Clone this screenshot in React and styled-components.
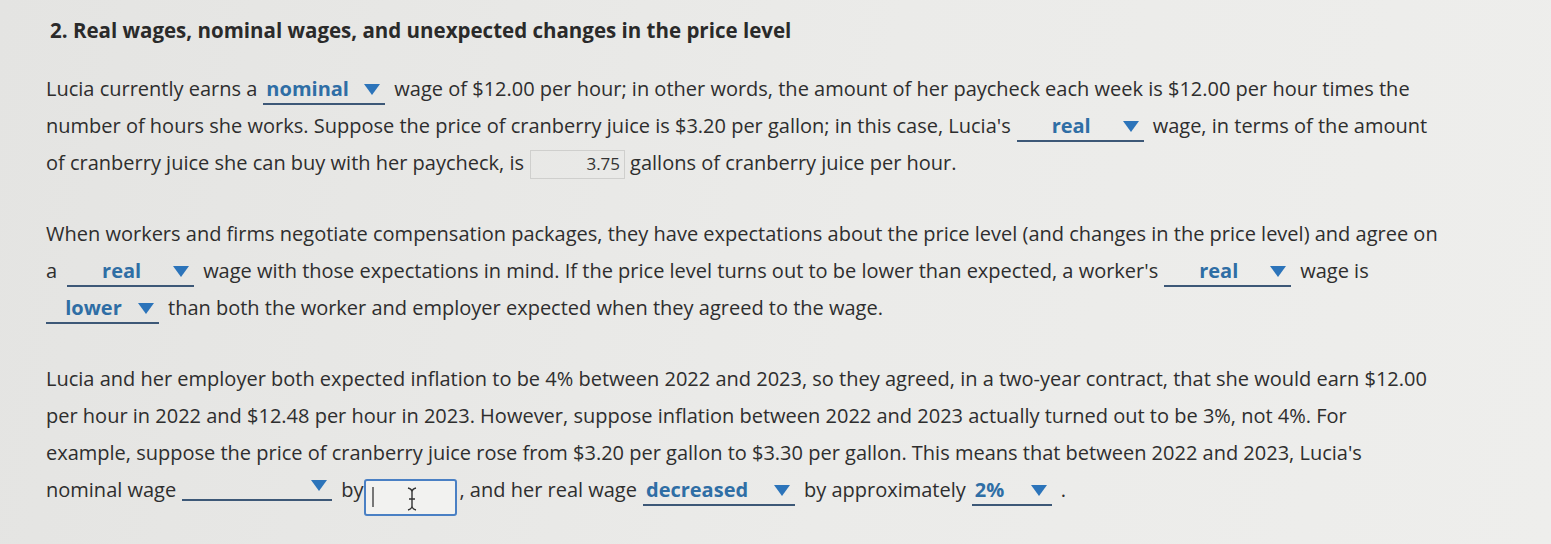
import React from 'react';
import styled, { createGlobalStyle } from 'styled-components';

const GlobalStyle = createGlobalStyle`
    html, body {
        margin: 0;
        padding: 0;
        background: #e8e8e6;
    }
    body {
        font-family: "Open Sans", "Liberation Sans", sans-serif;
        color: #2e2e2e;
    }
`

const Page = styled.div`
    width: 1551px;
    height: 544px;
    box-sizing: border-box;
    padding: 17px 0 0 46px;
    background: linear-gradient(100deg, #e4e4e2 0%, #ebebe9 55%, #eeeeec 100%);
    overflow: hidden;
`

const Title = styled.h2`
    margin: 0 0 27px 4px;
    font-size: 20.5px;
    font-weight: 700;
    line-height: 26px;
    color: #2a2a2a;
`

const Paragraph = styled.p`
    margin: 0 0 34px 0;
    font-size: 20px;
    line-height: 37px;
    white-space: nowrap;
`

const Select = styled.span`
    display: inline-flex;
    align-items: baseline;
    box-sizing: border-box;
    width: ${p => p.$width}px;
    margin: 0 ${p => p.$gap ?? 9}px 0 ${p => p.$lead ?? 6}px;
    padding-bottom: 2px;
    border-bottom: 2px solid #3d5877;
    vertical-align: baseline;
    line-height: 24px;
`

const SelectValue = styled.span`
    flex: 1;
    min-height: 24px;
    text-align: ${p => p.$align || 'left'};
    padding-left: 3px;
    font-weight: 700;
    color: #2f6ea5;
`

const Caret = styled.svg`
    align-self: center;
    width: 16px;
    height: 11px;
    margin-right: 5px;
    flex: none;
`

const NumberBox = styled.span`
    display: inline-block;
    box-sizing: border-box;
    width: 95px;
    margin: 0 5px 0 6px;
    padding: 1px 4px 2px 0;
    border: 1px solid #cfcfcd;
    font-size: 17px;
    line-height: 24px;
    text-align: right;
    color: #333;
    vertical-align: baseline;
`

const ActiveBox = styled.span`
    position: relative;
    display: inline-flex;
    align-items: center;
    box-sizing: border-box;
    width: 93px;
    height: 37px;
    margin: 0 2px 0 1px;
    border: 2px solid #4a80c4;
    border-radius: 3px;
    background: #f2f2f0;
    vertical-align: -10px;
`

const TextCursor = styled.span`
    width: 2px;
    height: 20px;
    margin-left: 6px;
    background: #777;
`

const Beam = styled.svg`
    position: absolute;
    left: 40px;
    top: 6px;
    width: 12px;
    height: 24px;
`

function Dropdown({ value, width, align, lead, gap }) {
    return (
        <Select $width={width} $lead={lead} $gap={gap}>
            <SelectValue $align={align}>{value}</SelectValue>
            <Caret viewBox="0 0 16 11">
                <path d="M0 0 H16 L8 11 Z" fill="#2c74ba" />
            </Caret>
        </Select>
    );
}

export default function App() {
    return (
        <>
            <GlobalStyle />
            <Page>
                <Title>2. Real wages, nominal wages, and unexpected changes in the price level</Title>

                <Paragraph>
                    Lucia currently earns a
                    <Dropdown value="nominal" width={122} />
                    wage of $12.00 per hour; in other words, the amount of her paycheck each week is $12.00 per hour times the
                    <br />
                    number of hours she works. Suppose the price of cranberry juice is $3.20 per gallon; in this case, Lucia's
                    <Dropdown value="real" width={127} align="center" />
                    wage, in terms of the amount
                    <br />
                    of cranberry juice she can buy with her paycheck, is
                    <NumberBox>3.75</NumberBox>
                    gallons of cranberry juice per hour.
                </Paragraph>

                <Paragraph>
                    When workers and firms negotiate compensation packages, they have expectations about the price level (and changes in the price level) and agree on
                    <br />
                    a
                    <Dropdown value="real" width={127} align="center" lead={10} />
                    wage with those expectations in mind. If the price level turns out to be lower than expected, a worker's
                    <Dropdown value="real" width={127} align="center" />
                    wage is
                    <br />
                    <Dropdown value="lower" width={113} align="center" lead={0} />
                    than both the worker and employer expected when they agreed to the wage.
                </Paragraph>

                <Paragraph>
                    Lucia and her employer both expected inflation to be 4% between 2022 and 2023, so they agreed, in a two-year contract, that she would earn $12.00
                    <br />
                    per hour in 2022 and $12.48 per hour in 2023. However, suppose inflation between 2022 and 2023 actually turned out to be 3%, not 4%. For
                    <br />
                    example, suppose the price of cranberry juice rose from $3.20 per gallon to $3.30 per gallon. This means that between 2022 and 2023, Lucia's
                    <br />
                    nominal wage
                    <Dropdown value="" width={150} />
                    by
                    <ActiveBox>
                        <TextCursor />
                        <Beam viewBox="0 0 12 24">
                            <path d="M2 1 Q6 2 6 5 V19 Q6 22 2 23 M10 1 Q6 2 6 5 M6 19 Q6 22 10 23 M3 12 H9" stroke="#333" strokeWidth="1.4" fill="none" />
                        </Beam>
                    </ActiveBox>
                    , and her real wage
                    <Dropdown value="decreased" width={152} />
                    by approximately
                    <Dropdown value="2%" width={80} />
                    .
                </Paragraph>
            </Page>
        </>
    );
}
